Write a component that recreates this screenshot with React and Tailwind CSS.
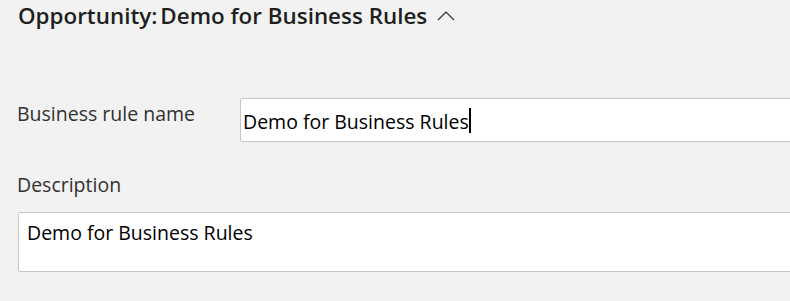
import React from "react";

export default function App() {
  return (
    <div className="w-[790px] h-[301px] overflow-hidden bg-[#f2f2f2] text-[#201f1e]" style={{ fontFamily: '"Open Sans", "Noto Sans", sans-serif' }}>
      <div className="flex items-center pl-[18px] pt-[2px]">
        <h1 className="text-[22.4px] font-semibold leading-[28px] flex">
          <span>Opportunity:</span>
          <span className="ml-[3px]">Demo for Business Rules</span>
        </h1>
        <svg className="ml-[10px] mt-[-1px]" width="18" height="10" viewBox="0 0 18 10" fill="none">
          <path d="M1 9 L9 1 L17 9" stroke="#323130" strokeWidth="1.2" />
        </svg>
      </div>
      <div className="flex items-start mt-[68px] pl-[17px]">
        <label className="w-[223px] pt-[3px] text-[19.5px] text-[#323130] leading-[26px]">Business rule name</label>
        <div className="flex-1 -mr-[40px] h-[44px] bg-white border border-[#c8c6c4] rounded-[2px] flex items-start pl-[2px] pt-[10px]">
          <span className="text-[19.5px] text-black leading-[26px]">Demo for Business Rules</span>
          <span className="w-[2px] h-[25px] bg-black mt-[-1px]"></span>
        </div>
      </div>
      <div className="pl-[17px] mt-[30px]">
        <div className="text-[19.5px] text-[#323130] leading-[26px]">Description</div>
        <div className="mt-[14px] ml-[1px] -mr-[40px] h-[60px] bg-white border border-[#c8c6c4] rounded-[2px] pl-[8px] pt-[7px]">
          <span className="text-[19.5px] text-black leading-[26px]">Demo for Business Rules</span>
        </div>
      </div>
    </div>
  );
}
